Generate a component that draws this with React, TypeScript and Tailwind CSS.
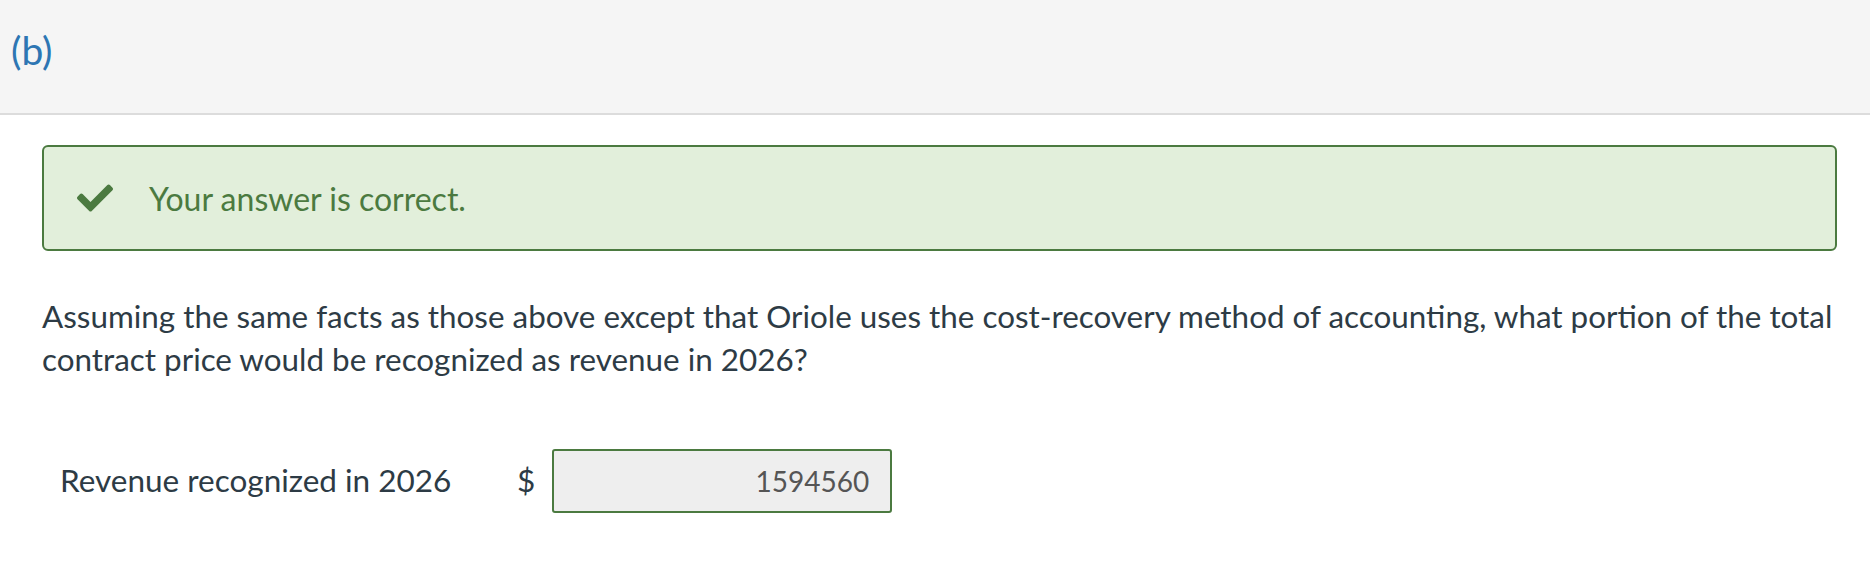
import { FaCheck } from "react-icons/fa";

export default function App() {
  return (
    <div className="min-h-[576px] bg-white font-['Lato','Liberation_Sans',sans-serif] text-[#2d3b45]">
      {/* Part header */}
      <div className="flex h-[115px] items-center border-b-2 border-[#dcdcdc] bg-[#f5f5f5] pb-[12px] pl-[11px]">
        <span className="text-[39px] leading-none text-[#2d76b3]">(b)</span>
      </div>

      <div className="pl-[42px] pr-[33px]">
        {/* Feedback */}
        <div className="mt-[30px] flex h-[106px] items-center rounded-[6px] border-2 border-[#4b7a40] bg-[#e2efdb] pl-[33px] text-[#4b7a40]">
          <FaCheck className="h-[36px] w-[36px]" />
          <span className="ml-[36px] mt-[2px] text-[32px] leading-none">Your answer is correct.</span>
        </div>

        {/* Question */}
        <p className="-mr-[8px] mt-[44px] text-[31.4px] leading-[43px]">
          Assuming the same facts as those above except that Oriole uses the cost-recovery method of
          accounting, what portion of the total contract price would be recognized as revenue in 2026?
        </p>

        {/* Answer row */}
        <div className="mt-[68px] flex items-center pl-[18px]">
          <span className="w-[457px] text-[31.5px] leading-none">Revenue recognized in 2026</span>
          <span className="text-[31.5px] leading-none">$</span>
          <div className="ml-[17px] flex h-[64px] w-[340px] items-center justify-end rounded-[3px] border-2 border-[#4b7a40] bg-[#eeeeee] pr-[21px] text-[28px] text-[#555555]">
            1594560
          </div>
        </div>
      </div>
    </div>
  );
}
